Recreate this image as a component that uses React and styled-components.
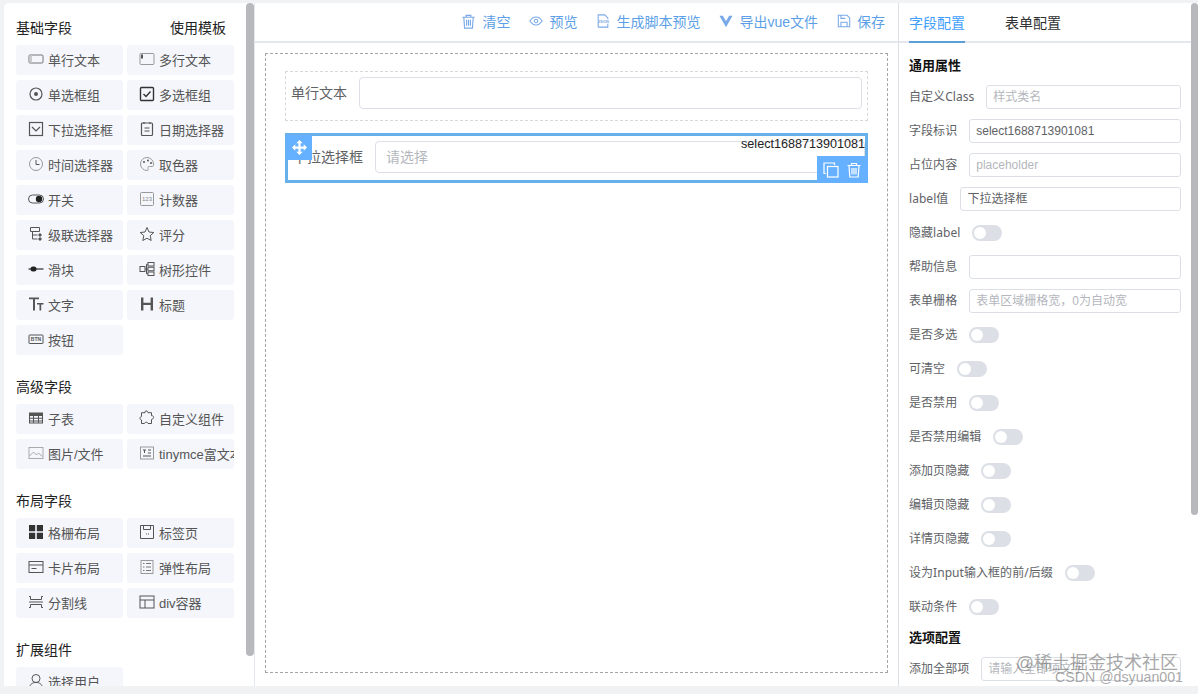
import React from "react";
import styled, { createGlobalStyle } from "styled-components";

const GlobalStyle = createGlobalStyle`
  html, body {
    margin: 0;
    padding: 0;
    height: 100%;
    overflow: hidden;
    background: #f1f2f4;
    font-family: "Liberation Sans", "Noto Sans CJK SC", sans-serif;
  }
  * { box-sizing: border-box; }
`;

const Svg = ({ size = 16, children, fill = "none", sw = 1.2 }) => (
  <svg width={size} height={size} viewBox="0 0 16 16" fill={fill} stroke="currentColor" strokeWidth={sw}>
    {children}
  </svg>
);

const icons = {
  input: <Svg sw={1}><rect x="1" y="4" width="14" height="8" rx="1" stroke="#777" /><path d="M1.500 4.500v7h2.500v-7z" fill="#ccc" stroke="none" /></Svg>,
  textarea: <Svg sw={1}><rect x="1" y="2.500" width="14" height="11" rx="1" stroke="#999" /><path d="M2 3.500v4h2v-4z" fill="#555" stroke="none" /></Svg>,
  radio: <Svg><circle cx="8" cy="8" r="6" /><circle cx="8" cy="8" r="2" fill="currentColor" stroke="none" /></Svg>,
  checkbox: <Svg sw={1.4}><rect x="1.500" y="1.500" width="13" height="13" rx="1" stroke="#333" /><path d="M4.500 8l2.500 2.500 4.500-5" stroke="#333" /></Svg>,
  select: <Svg><rect x="1.500" y="1.500" width="13" height="13" /><path d="M4 6l4 4 4-4" /></Svg>,
  date: <Svg><rect x="2.500" y="2" width="11" height="12.500" rx="1" /><path d="M5 1v2M11 1v2M5.500 7h5M5.500 10h5" /></Svg>,
  time: <Svg sw={1}><circle cx="8" cy="8" r="6.500" stroke="#999" /><path d="M8 4v4.500h3.500" /></Svg>,
  color: <Svg sw={1}><path d="M8 1.500a6.500 6.500 0 1 0 0 13c1.500 0 1.500-1 1-2s0-2 1.500-2h3c1 0 1-1 1-2.500A6.500 6.500 0 0 0 8 1.500z" stroke="#999" /><circle cx="5" cy="6" r="1" fill="currentColor" stroke="none" /><circle cx="9" cy="4.500" r="1" fill="currentColor" stroke="none" /><circle cx="12" cy="7" r="1" fill="currentColor" stroke="none" /></Svg>,
  toggle: <Svg sw={1}><rect x="0.500" y="4" width="15" height="8" rx="4" /><circle cx="11" cy="8" r="3.200" fill="#222" stroke="none" /></Svg>,
  number: <Svg sw={1}><rect x="1.500" y="1.500" width="13" height="13" rx="1" stroke="#999" /><text x="8" y="10" fontSize="6" textAnchor="middle" stroke="none" fill="#888">123</text></Svg>,
  cascader: <Svg sw={1}><path d="M2.500 1.500h9v4h-9zM4.500 5.500v7.500h5M4.500 9h5" /><circle cx="12" cy="9" r="1.200" fill="currentColor" /><circle cx="12" cy="13" r="1.200" fill="currentColor" /></Svg>,
  star: <Svg sw={1}><path d="M8 1.500l2 4.500 4.800.5-3.600 3.200 1 4.800L8 12.200 3.800 14.500l1-4.800L1.200 6.500 6 6z" /></Svg>,
  slider: <Svg sw={1.6}><path d="M0.500 8h15" /><rect x="2.500" y="5.500" width="6" height="5" rx="2.500" fill="#222" stroke="none" /></Svg>,
  tree: <Svg sw={1}><rect x="1" y="5.500" width="5" height="5" /><rect x="9" y="1.500" width="6" height="3.500" /><rect x="9" y="6.250" width="6" height="3.500" /><rect x="9" y="11" width="6" height="3.500" /><path d="M6 8h3M7.500 8V3.250H9M7.500 8v4.750H9" /></Svg>,
  text: <Svg fill="currentColor" sw={0}><path d="M1 1.500h10v1.800H7V14.500H5V3.300H1zM9 7h6.500v1.500h-2.300v6h-1.700v-6H9z" /></Svg>,
  heading: <Svg fill="currentColor" sw={0}><path d="M2 1.500h2.400v5.300h7.200V1.500H14v13h-2.400V8.900H4.400v5.600H2z" /></Svg>,
  button: <Svg sw={1}><rect x="1" y="4" width="14" height="8.500" rx="0.500" /><text x="8" y="10.300" fontSize="5" fontWeight="700" textAnchor="middle" stroke="none" fill="#555">BTN</text></Svg>,
  table: <Svg fill="currentColor" sw={0}><path d="M1 2.500h14v11H1zM2 6v1.800h3V6zm4 0v1.800h4V6zm5 0v1.800h3V6zM2 8.800v1.800h3V8.800zm4 0v1.800h4V8.800zm5 0v1.800h3V8.800zM2 11.500v1h3v-1zm4 0v1h4v-1zm5 0v1h3v-1z" /></Svg>,
  puzzle: <Svg sw={1}><path d="M6 1.500c1-1 3-.5 3 1.200h3.500v3c2-.5 3 2.500 1 3.300l-1 .5v4H9c-.5-1.800-3-1.800-3.500 0H2.500v-3.500c-2-.5-2-3 0-3.500V2.700H6z" /></Svg>,
  image: <Svg sw={1}><rect x="1" y="2.500" width="14" height="11" stroke="#aaa" /><path d="M1.500 11l4-4 3 3 2-2 4 3.500" stroke="#aaa" /></Svg>,
  rich: <Svg sw={1}><rect x="1.500" y="2" width="13" height="12" stroke="#999" /><path d="M4 5h3M5.500 5v3M9 5h3M9 8h3M4 11h8" /></Svg>,
  grid: <Svg fill="#333" sw={0}><path d="M1 1h6.200v6.200H1zM8.800 1H15v6.200H8.800zM1 8.800h6.200V15H1zM8.800 8.800H15V15H8.800z" /></Svg>,
  tabs: <Svg sw={1}><path d="M1.500 1.500h13v13h-13zM4.500 1.500v4h7v-4" /><path d="M7 10h4" strokeDasharray="1 1" /></Svg>,
  card: <Svg sw={1}><rect x="1" y="2.500" width="14" height="11" /><path d="M1 6h14M3.500 9.500h5" /></Svg>,
  flex: <Svg sw={1}><rect x="2" y="1.500" width="12" height="13" stroke="#999" /><path d="M4 4.500h1.500M7 4.500h5M4 8h1.500M7 8h5M4 11.500h1.500M7 11.500h5" stroke="#777" /></Svg>,
  divider: <Svg sw={1}><path d="M1 2.500h1.500v3h11v-3H15M1 13.500h1.500v-3h11v3H15M1 8h14" /></Svg>,
  div: <Svg sw={1}><rect x="1" y="2" width="14" height="12" /><path d="M1 6h14M6 6v8" /></Svg>,
  user: <Svg sw={1}><circle cx="8" cy="5.500" r="4" /><path d="M1.500 15c.5-4 3-5.500 6.500-5.500s6 1.500 6.500 5.500" /></Svg>,
};

const groups = [
  {
    title: "基础字段",
    extra: "使用模板",
    items: [
      ["input", "单行文本"], ["textarea", "多行文本"], ["radio", "单选框组"], ["checkbox", "多选框组"],
      ["select", "下拉选择框"], ["date", "日期选择器"], ["time", "时间选择器"], ["color", "取色器"],
      ["toggle", "开关"], ["number", "计数器"], ["cascader", "级联选择器"], ["star", "评分"],
      ["slider", "滑块"], ["tree", "树形控件"], ["text", "文字"], ["heading", "标题"], ["button", "按钮"],
    ],
  },
  {
    title: "高级字段",
    items: [["table", "子表"], ["puzzle", "自定义组件"], ["image", "图片/文件"], ["rich", "tinymce富文本"]],
  },
  {
    title: "布局字段",
    items: [["grid", "格栅布局"], ["tabs", "标签页"], ["card", "卡片布局"], ["flex", "弹性布局"], ["divider", "分割线"], ["div", "div容器"]],
  },
  { title: "扩展组件", items: [["user", "选择用户"]] },
];

const Page = styled.div`
  display: flex;
  height: 694px;
  padding: 3px 0 8px 4px;
  overflow: hidden;
`;

const LeftPanel = styled.aside`
  position: relative;
  flex: 0 0 250px;
  padding: 15px 0 0 12px;
  background: #fff;
  border-radius: 5px 0 0 0;
  overflow: hidden;
`;

const Scrollbar = styled.div`
  position: absolute;
  top: 0;
  right: 0;
  width: ${(p) => p.$width}px;
  height: ${(p) => p.$height}px;
  background: #b8b9bd;
  border-radius: 4px;
`;

const GroupHead = styled.div`
  display: flex;
  justify-content: space-between;
  width: 210px;
  height: 20px;
  margin-bottom: 7px;
  font-size: 14px;
  line-height: 20px;
  color: #222;
`;

const Group = styled.section`
  margin-bottom: 22px;
`;

const ItemGrid = styled.div`
  display: grid;
  grid-template-columns: 107px 107px;
  grid-auto-rows: 30px;
  gap: 5px 4px;
`;

const Item = styled.div`
  display: flex;
  align-items: center;
  gap: 4px;
  padding: 0 0 2px 12px;
  background: #f4f6fc;
  border-radius: 3px;
  font-size: 13px;
  color: #555;
  white-space: nowrap;
  overflow: hidden;
  & > svg { flex: none; color: #555; }
`;

const Center = styled.main`
  flex: 0 0 644px;
  display: flex;
  flex-direction: column;
  background: #fff;
  border-left: 1px solid #e4e7ed;
`;

const Toolbar = styled.div`
  display: flex;
  justify-content: flex-end;
  align-items: center;
  gap: 19px;
  height: 40px;
  padding: 0 13px 2px 0;
  border-bottom: 2px solid #e4e7ed;
`;

const ToolButton = styled.span`
  display: flex;
  align-items: center;
  gap: 6px;
  font-size: 14px;
  color: #5d9fe6;
  & > svg { color: #7aa9e8; }
`;

const Canvas = styled.div`
  flex: 1;
  margin: 10px 10px 13px 10px;
  padding: 17px 19px 0 19px;
  border: 1px dashed #a5a5a5;
`;

const FieldRow = styled.div`
  display: flex;
  align-items: flex-start;
  height: 50px;
  padding: 5px 5px 0 5px;
  margin-bottom: 12px;
  border: 1px dashed #d8d8d8;
`;

const FieldLabel = styled.label`
  flex: none;
  height: 32px;
  margin-right: 12px;
  font-size: 14px;
  line-height: 32px;
  color: #606266;
`;

const FieldBox = styled.div`
  flex: 1;
  height: 32px;
  padding-left: 10px;
  border: 1px solid #dcdfe6;
  border-radius: 4px;
  font-size: 14px;
  line-height: 30px;
  color: #b4b7bd;
`;

const ActiveField = styled.div`
  position: relative;
  display: flex;
  align-items: flex-start;
  height: 50px;
  padding: 5px 0 0 5px;
  border: 3px solid #66b1ec;
`;

const DragHandle = styled.div`
  position: absolute;
  top: -1px;
  left: -2px;
  display: flex;
  align-items: center;
  justify-content: center;
  width: 26px;
  height: 25px;
  background: #66b1ff;
  color: #fff;
`;

const FieldId = styled.div`
  position: absolute;
  top: 0;
  right: 0;
  font-size: 12.6px;
  line-height: 16px;
  color: #222;
`;

const ActionBar = styled.div`
  position: absolute;
  right: -3px;
  bottom: -3px;
  display: flex;
  align-items: center;
  justify-content: space-around;
  width: 51px;
  height: 27px;
  padding: 0 3px 0 2px;
  background: #66b1ff;
  color: #fff;
`;

const RightPanel = styled.aside`
  position: relative;
  flex: 0 0 300px;
  background: #fff;
  border-left: 1px solid #dcdfe6;
  overflow: hidden;
`;

const Tabs = styled.div`
  display: flex;
  gap: 40px;
  height: 40px;
  padding-left: 10px;
  border-bottom: 2px solid #e4e7ed;
`;

const Tab = styled.div`
  height: 40px;
  font-size: 14px;
  line-height: 40px;
  color: ${(p) => (p.$active ? "#409eff" : "#303133")};
  border-bottom: 2px solid ${(p) => (p.$active ? "#5a9fd8" : "transparent")};
`;

const ConfigBody = styled.div`
  padding: 14px 17px 0 10px;
`;

const ConfigTitle = styled.div`
  height: 20px;
  margin-bottom: 8px;
  font-size: 13px;
  font-weight: 700;
  line-height: 18px;
  color: #111;
`;

const ConfigRow = styled.div`
  display: flex;
  align-items: center;
  height: 24px;
  margin-bottom: 10px;
`;

const ConfigLabel = styled.label`
  flex: none;
  margin-right: 12px;
  padding-bottom: 2px;
  font-family: "Noto Sans", "Noto Sans CJK SC", sans-serif;
  font-size: 12px;
  letter-spacing: 0.05px;
  color: #606266;
  white-space: nowrap;
`;

const ConfigInput = styled.div`
  flex: 1;
  height: 24px;
  padding-left: 6px;
  border: 1px solid #dcdfe6;
  border-radius: 3px;
  font-size: 12px;
  line-height: 22px;
  white-space: nowrap;
  overflow: hidden;
  color: ${(p) => (p.$value ? "#606266" : "#b4b7bd")};
`;

const Toggle = styled.span`
  display: block;
  width: 30px;
  height: 16px;
  border-radius: 8px;
  background: #dcdfe6;
  &::before {
    content: "";
    display: block;
    width: 12px;
    height: 12px;
    margin: 2px;
    border-radius: 50%;
    background: #fff;
  }
`;

const Watermark = styled.div`
  position: absolute;
  right: ${(p) => p.$right}px;
  top: ${(p) => p.$top}px;
  font-size: ${(p) => p.$size}px;
  line-height: 1;
  white-space: nowrap;
  color: rgba(110, 110, 110, 0.6);
`;

const configRows = [
  ["自定义Class", "样式类名"],
  ["字段标识", "select1688713901081", true],
  ["占位内容", "placeholder"],
  ["label值", "下拉选择框", true],
  ["隐藏label"],
  ["帮助信息", ""],
  ["表单栅格", "表单区域栅格宽，0为自动宽"],
  ["是否多选"],
  ["可清空"],
  ["是否禁用"],
  ["是否禁用编辑"],
  ["添加页隐藏"],
  ["编辑页隐藏"],
  ["详情页隐藏"],
  ["设为Input输入框的前/后缀"],
  ["联动条件"],
];

const renderRow = ([label, value, filled]) => (
  <ConfigRow key={label}>
    <ConfigLabel>{label}</ConfigLabel>
    {value === undefined ? <Toggle /> : <ConfigInput $value={filled}>{value}</ConfigInput>}
  </ConfigRow>
);

const tools = [
  ["trash", "清空"],
  ["eye", "预览"],
  ["doc", "生成脚本预览"],
  ["vue", "导出vue文件"],
  ["save", "保存"],
];

const trashPath = <path d="M1.500 3.500h13M5.500 3.500V1.500h5v2M3 3.500l.8 11.500h8.400L13 3.500M6 6v6.500M8 6v6.500M10 6v6.500" />;

const toolIcons = {
  trash: <Svg size={15}>{trashPath}</Svg>,
  eye: <Svg size={14}><path d="M1 8c2-3 4.300-4.500 7-4.500S13 5 15 8c-2 3-4.300 4.500-7 4.500S3 11 1 8z" /><circle cx="8" cy="8" r="2" /></Svg>,
  doc: <Svg size={14}><path d="M2.500 15V1h7.500l3.500 3.500V6M13.500 11v4h-11" /><text x="8.500" y="10" fontSize="4.500" textAnchor="middle" stroke="none" fill="#7aa9e8" fontWeight="700">JSON</text></Svg>,
  vue: <Svg size={14} fill="currentColor" sw={0}><path d="M0.500 2h4L8 8l3.500-6h4L8 15z" /><path d="M4.800 2h2L8 4.300 9.200 2h2L8 7.500z" fill="#fff" /></Svg>,
  save: <Svg size={14}><path d="M1.500 1.500h10l3 3v10h-13zM4.500 14.500v-5h7v5M4.500 1.500v3.500h5" /></Svg>,
};

export default function App() {
  return (
    <>
      <GlobalStyle />
      <Page>
        <LeftPanel>
          {groups.map((group) => (
            <Group key={group.title}>
              <GroupHead>
                <span>{group.title}</span>
                {group.extra && <span>{group.extra}</span>}
              </GroupHead>
              <ItemGrid>
                {group.items.map(([icon, label]) => (
                  <Item key={label}>
                    {icons[icon]}
                    {label}
                  </Item>
                ))}
              </ItemGrid>
            </Group>
          ))}
          <Scrollbar $width={8} $height={653} />
        </LeftPanel>

        <Center>
          <Toolbar>
            {tools.map(([icon, label]) => (
              <ToolButton key={label}>
                {toolIcons[icon]}
                {label}
              </ToolButton>
            ))}
          </Toolbar>
          <Canvas>
            <FieldRow>
              <FieldLabel>单行文本</FieldLabel>
              <FieldBox />
            </FieldRow>
            <ActiveField>
              <FieldLabel>下拉选择框</FieldLabel>
              <FieldBox>请选择</FieldBox>
              <DragHandle>
                <svg width="15" height="15" viewBox="0 0 16 16" fill="currentColor">
                  <path d="M8 0l3.500 3.500H9.200v3.300h3.300V4.500L16 8l-3.500 3.500V9.200H9.200v3.300h2.300L8 16l-3.500-3.500h2.300V9.200H3.500v2.300L0 8l3.500-3.500v2.300h3.300V3.500H4.500z" />
                </svg>
              </DragHandle>
              <FieldId>select1688713901081</FieldId>
              <ActionBar>
                <Svg size={16}>
                  <rect x="4.500" y="4.500" width="10.500" height="10.500" />
                  <path d="M3 11.500H1V1h10.500v2" />
                </Svg>
                <Svg size={16}>{trashPath}</Svg>
              </ActionBar>
            </ActiveField>
          </Canvas>
        </Center>

        <RightPanel>
          <Tabs>
            <Tab $active>字段配置</Tab>
            <Tab>表单配置</Tab>
          </Tabs>
          <ConfigBody>
            <ConfigTitle>通用属性</ConfigTitle>
            {configRows.map(renderRow)}
            <ConfigTitle>选项配置</ConfigTitle>
            {renderRow(["添加全部项", "请输入全部项文字"])}
          </ConfigBody>
          <Scrollbar $width={7} $height={512} />
          <Watermark $right={20} $top={651} $size={18}>@稀土掘金技术社区</Watermark>
          <Watermark $right={15} $top={667} $size={14.2}>CSDN @dsyuan001</Watermark>
        </RightPanel>
      </Page>
    </>
  );
}
